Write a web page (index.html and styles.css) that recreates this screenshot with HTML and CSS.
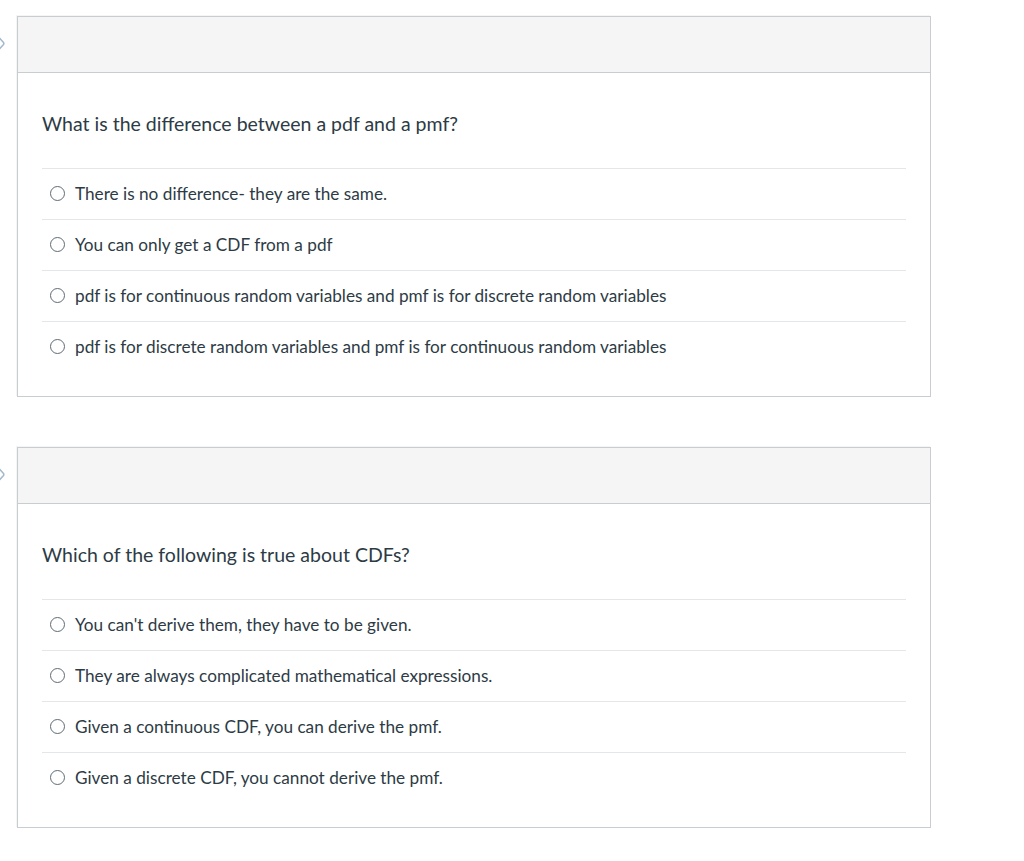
FILE: index.html
```html
<html>
  <head>
    <link rel="stylesheet" href="styles.css">
  </head>
  <body>
    <main class="quiz">
      <div class="question-row">
        <div class="gutter">
          <svg class="flag" width="8" height="15" viewBox="0 0 8 15"><path d="M-1 1.5 L3.5 6.5 Q4.2 7.5 3.5 8.5 L-1 13.5" fill="none" stroke="#a3b8cc" stroke-width="1.5"/></svg>
        </div>
        <section class="question">
          <header class="question-header"></header>
          <div class="question-body">
            <p class="question-text">What is the difference between a pdf and a pmf?</p>
            <div class="answers">
              <label class="answer"><input type="radio" name="q1"> There is no difference- they are the same.</label>
              <label class="answer"><input type="radio" name="q1"> You can only get a CDF from a pdf</label>
              <label class="answer"><input type="radio" name="q1"> pdf is for continuous random variables and pmf is for discrete random variables</label>
              <label class="answer"><input type="radio" name="q1"> pdf is for discrete random variables and pmf is for continuous random variables</label>
            </div>
          </div>
        </section>
      </div>
      <div class="question-row">
        <div class="gutter">
          <svg class="flag" width="8" height="15" viewBox="0 0 8 15"><path d="M-1 1.5 L3.5 6.5 Q4.2 7.5 3.5 8.5 L-1 13.5" fill="none" stroke="#a3b8cc" stroke-width="1.5"/></svg>
        </div>
        <section class="question">
          <header class="question-header"></header>
          <div class="question-body">
            <p class="question-text">Which of the following is true about CDFs?</p>
            <div class="answers">
              <label class="answer"><input type="radio" name="q2"> You can't derive them, they have to be given.</label>
              <label class="answer"><input type="radio" name="q2"> They are always complicated mathematical expressions.</label>
              <label class="answer"><input type="radio" name="q2"> Given a continuous CDF, you can derive the pmf.</label>
              <label class="answer"><input type="radio" name="q2"> Given a discrete CDF, you cannot derive the pmf.</label>
            </div>
          </div>
        </section>
      </div>
    </main>
  </body>
</html>
```

FILE: styles.css
```css
body {
  margin: 0;
  background: #fff;
  color: #2d3b45;
  font-family: Lato, "Liberation Sans", sans-serif;
}
.quiz {
  padding-top: 16px;
  width: 931px;
}
.question-row {
  display: flex;
  margin-bottom: 50px;
}
.gutter {
  width: 17px;
  flex: none;
}
.flag {
  display: block;
  margin-top: 20px;
}
.question {
  flex: 1;
  border: 1px solid #c7cdd1;
  box-shadow: -1px -1px 0 rgba(0,0,0,0.04);
}
.question-header {
  height: 55px;
  background: #f5f5f5;
  border-bottom: 1px solid #c7cdd1;
}
.question-body {
  padding: 37px 24px 24px;
}
.question-text {
  margin: 0 0 31px;
  font-size: 19.5px;
  line-height: 27px;
}
.answer {
  display: flex;
  align-items: center;
  box-sizing: border-box;
  height: 51px;
  padding-bottom: 2px;
  border-top: 1px solid #e4e7e9;
  font-size: 17.2px;
  cursor: pointer;
}
.answer input {
  appearance: none;
  -webkit-appearance: none;
  width: 15px;
  height: 15px;
  margin: 0 10px 0 8px;
  border: 1.3px solid #5f6b73;
  border-radius: 50%;
  background: #fff;
}
.answer input:checked {
  background: radial-gradient(#2d3b45 3px, #fff 4px);
}
```
